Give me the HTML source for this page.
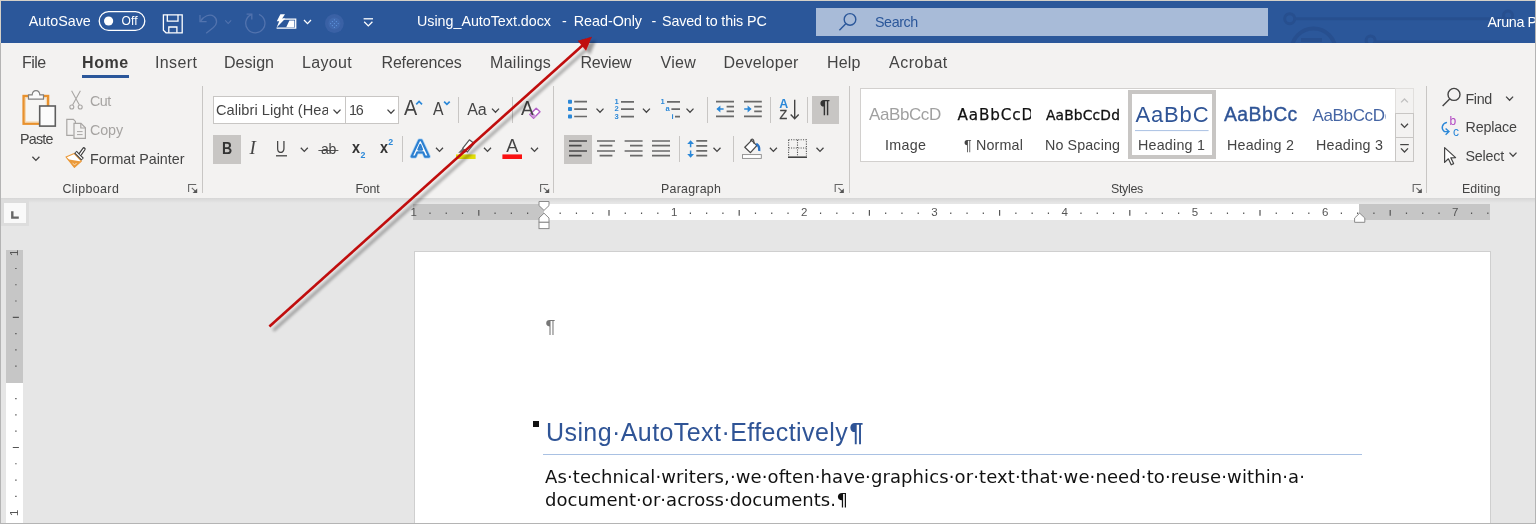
<!DOCTYPE html>
<html lang="en">
<head>
<meta charset="utf-8">
<title>Using_AutoText.docx - Read-Only - Word</title>
<style>
html,body{margin:0;padding:0;background:#fff;}
#app{position:relative;width:1536px;height:524px;overflow:hidden;background:#e6e6e6;font-family:"Liberation Sans",sans-serif;}
#app div{position:absolute;box-sizing:border-box;}
.layer{position:absolute;left:0;top:0;pointer-events:none;}
#texts{left:0;top:0;width:1536px;height:524px;will-change:transform;}
.t{position:absolute;white-space:pre;}
#titlebar{left:0;top:0;width:1536px;height:43px;background:#2b579a;}
#search{left:816px;top:8px;width:452px;height:28px;background:#a8bbd8;}
#ribbon{left:0;top:43px;width:1536px;height:155px;background:#f3f2f1;}
#ribshadow{left:0;top:198px;width:1536px;height:5px;background:linear-gradient(#d6d6d6,#e6e6e6);}
.sel{background:#c8c6c4;}
.combo{background:#fff;border:1px solid #c8c6c4;}
.vsep{width:1px;background:#c8c6c4;}
#gallery{left:860px;top:88px;width:554px;height:74px;background:#fff;border:1px solid #d2d0ce;}
#h1sel{left:1128px;top:90px;width:88px;height:69px;border:4px solid #c8c6c4;background:#fff;}
.gbtn{left:1395px;width:19px;background:#f3f2f1;border:1px solid #c8c6c4;}
#tabsel{left:1px;top:200px;width:28px;height:26px;background:#f9f9f9;border:3.5px solid #dddddd;}
#hruler{left:413px;top:204px;width:1077px;height:16px;background:#c6c6c6;}
#hrulerw{left:544px;top:204px;width:815px;height:16px;background:#fff;}
#vruler{left:6px;top:250px;width:17px;height:274px;background:#fff;}
#vrulerg{left:6px;top:250px;width:17px;height:133px;background:#c6c6c6;}
#page{left:414px;top:251px;width:1077px;height:280px;background:#fff;border:1px solid #cfcfcf;}
#h1line{left:543px;top:454px;width:819px;height:1px;background:#a9c1e3;}
#frame{left:0;top:0;width:1536px;height:524px;border:1px solid #b4b4b4;border-top-color:#d4d0c8;}
#frametl{left:0;top:0;width:1px;height:43px;background:#d4d0c8;}
#homeul{left:82px;top:75px;width:47px;height:3px;background:#2b579a;}
.clip{overflow:hidden;}

</style>
</head>
<body>
<div id="app">
<div id="titlebar"></div>
<div id="search"></div>
<div id="ribbon"></div>
<div id="ribshadow"></div>
<div id="homeul"></div>
<div class="vsep" style="left:202px;top:86px;height:107px"></div>
<div class="vsep" style="left:553px;top:86px;height:107px"></div>
<div class="vsep" style="left:849px;top:86px;height:107px"></div>
<div class="vsep" style="left:1426px;top:86px;height:107px"></div>
<div class="vsep" style="left:458px;top:97px;height:26px"></div>
<div class="vsep" style="left:512px;top:97px;height:26px"></div>
<div class="vsep" style="left:402px;top:136px;height:26px"></div>
<div class="vsep" style="left:707px;top:97px;height:26px"></div>
<div class="vsep" style="left:770px;top:97px;height:26px"></div>
<div class="vsep" style="left:807px;top:97px;height:26px"></div>
<div class="vsep" style="left:679px;top:136px;height:26px"></div>
<div class="vsep" style="left:733px;top:136px;height:26px"></div>
<div class="combo" style="left:213px;top:96px;width:133px;height:28px"></div>
<div class="combo" style="left:345px;top:96px;width:54px;height:28px"></div>
<div class="sel" style="left:213px;top:135px;width:28px;height:29px"></div>
<div class="sel" style="left:564px;top:135px;width:28px;height:29px"></div>
<div class="sel" style="left:812px;top:96px;width:27px;height:28px"></div>
<div id="gallery"></div>
<div id="h1sel"></div>
<div class="gbtn" style="top:88px;height:26px;border-color:#e1dfdd"></div>
<div class="gbtn" style="top:113px;height:25px"></div>
<div class="gbtn" style="top:137px;height:25px"></div>
<div id="tabsel"></div>
<div id="hruler"></div>
<div id="hrulerw"></div>
<div id="vruler"></div>
<div id="vrulerg"></div>
<div id="page"></div>
<div id="h1line"></div>
<div style="left:533px;top:421px;width:6px;height:6px;background:#111"></div>

<svg class="layer" width="1536" height="524" viewBox="0 0 1536 524">
<defs>
<path id="chev" d="M-3.5,-1.8 L0,1.8 L3.5,-1.8" fill="none" stroke-width="1.3"/>
<g id="launch" fill="none" stroke="#666" stroke-width="1.1"><path d="M0.6,8 V0.5 H8.2 M3.8,3.8 L8.6,8.4"/><path d="M9.2,4.4 V9 H4.6 Z" fill="#555" stroke="none"/></g>
</defs>
<!-- ===== title bar decorations ===== -->
<clipPath id="tbclip"><rect x="0" y="0" width="1536" height="43"/></clipPath>
<g fill="none" stroke="#274f8f" stroke-width="3" clip-path="url(#tbclip)">
<circle cx="1289.7" cy="18.7" r="5"/><path d="M1295,18.7 H1512"/>
<circle cx="1313.5" cy="50.5" r="22" stroke-width="4"/>
<path d="M1301,40 H1322" stroke-width="4"/>
<circle cx="1370.6" cy="40.5" r="4.5"/><path d="M1375,42 H1500"/>
<circle cx="1508" cy="15.4" r="4.5"/>
</g>
<!-- ===== title bar icons ===== -->
<g fill="none" stroke="#fff" stroke-width="1.3">
<rect x="99.2" y="11.6" width="45.6" height="18.8" rx="9.4"/>
<circle cx="108.6" cy="21" r="4.6" fill="#fff" stroke="none"/>
<!-- save -->
<path d="M163.4,14.8 H182.2 V32.8 H166 L163.4,30.2 Z"/>
<path d="M167.3,14.8 V21.2 H178 V14.8 M168.8,32.8 V27 H176.9 V32.8"/>
<!-- touch mode -->
<path d="M283,19.2 H295.7 V28.2 H276.6"/>
<path d="M286.2,27.2 L289.4,20.6 H294.4 V27.2 Z" fill="#fff" stroke="none"/>
<path d="M280.4,14.2 H285 L282.2,18.4 H285.4 L276.6,27.6 L279.2,21.2 H276.8 Z" fill="#fff" stroke="none"/>
<use href="#chev" x="307.5" y="21.8" stroke="#fff"/>
<path d="M363.6,18.8 H373"/>
<path d="M364.2,21.8 L368.3,25.9 L372.4,21.8"/>
</g>
<g fill="none" stroke="#5273ae" stroke-width="1.3">
<path d="M200,15 V21.6 H206.6"/>
<path d="M200.4,21.4 C203.4,16 210,13.4 214,16.4 C218,19.6 217,24.6 213.4,27.6 L206.2,33.2"/>
<use href="#chev" x="228.2" y="22" stroke="#5273ae" transform="translate(228.2 22) scale(0.85) translate(-228.2 -22)"/>
<path d="M251.2,14.6 A9.6,9.6 0 1 0 259,14.4"/>
<path d="M246.6,14.2 H251.8 V19.4"/>
</g>
<circle cx="334.4" cy="23.5" r="9.4" fill="#3a61a5"/>
<circle cx="334.4" cy="23.5" r="6" fill="#4069ae"/>
<g fill="#5d93dc"><circle cx="332.4" cy="21.6" r="0.7"/><circle cx="336.4" cy="21.6" r="0.7"/><circle cx="334.4" cy="23.6" r="0.7"/><circle cx="332.4" cy="25.6" r="0.7"/><circle cx="336.4" cy="25.6" r="0.7"/><circle cx="334.4" cy="19.8" r="0.6"/><circle cx="334.4" cy="27.4" r="0.6"/><circle cx="330.6" cy="23.6" r="0.6"/><circle cx="338.2" cy="23.6" r="0.6"/></g>
<!-- search icon -->
<g fill="none" stroke="#2b579a" stroke-width="1.4">
<circle cx="850" cy="19.4" r="5.8"/><path d="M846,23.6 L839.4,30.2"/>
</g>

<!-- ===== clipboard ===== -->
<rect x="23.6" y="96" width="24.5" height="27.7" fill="#f7f6f4" stroke="#e8912d" stroke-width="2.4"/>
<rect x="25.4" y="97.8" width="20.9" height="24.1" fill="none" stroke="#f6d7ac" stroke-width="1"/>
<path d="M28.5,99.2 V94.8 H32.2 C32.6,89.2 39.4,89.2 39.8,94.8 H43.5 V99.2 Z" fill="#fafafa" stroke="#808080" stroke-width="1.2"/>
<rect x="39.7" y="106" width="15.6" height="20.1" fill="#fbfbfb" stroke="#5e5e5e" stroke-width="1.6"/>
<use href="#chev" x="35.9" y="158.6" stroke="#444"/>
<!-- cut -->
<g fill="none" stroke="#a8a6a4" stroke-width="1.1">
<path d="M71.6,90.8 L79.4,105 M80.4,90.8 L72.6,105"/>
<circle cx="71.8" cy="107" r="2"/><circle cx="80.2" cy="107" r="2"/>
</g>
<!-- copy -->
<g fill="none" stroke="#a8a6a4" stroke-width="1.2">
<path d="M73.6,135.4 H66.8 V119.4 H73.4 L75.4,121.4 V123"/>
<path d="M74,123.4 H81 L85.4,127.8 V138.4 H74 Z" fill="#f3f2f1"/>
<path d="M80.8,123.6 V128 H85.2"/>
<path d="M77,131.6 H82.6 M77,134.6 H82.6" stroke-width="1"/>
</g>
<!-- format painter -->
<path d="M66,157 L74.2,153.6 L81.4,161.1 L74.4,167.4 Z" fill="#fff" stroke="#eb9a3a" stroke-width="1.1" stroke-linejoin="round"/>
<path d="M66,157 L69.2,159.4 L81.2,161.4 L74.4,167.4 Z" fill="#eb9a3a"/>
<path d="M72.6,163.2 L74.4,164.6 L76.6,163.4" fill="none" stroke="#fbe3c4" stroke-width="0.9"/>
<path d="M75.4,152 L82.6,159.2" stroke="#3d3d3d" stroke-width="3.6" fill="none"/>
<path d="M75.9,152.5 L82.1,158.7" stroke="#fff" stroke-width="1.3" fill="none"/>
<path d="M80.6,153.6 L83.9,149" stroke="#3d3d3d" stroke-width="3.6" stroke-linecap="round" fill="none"/>
<path d="M80.3,154.2 L83.9,149.2" stroke="#fff" stroke-width="1.3" stroke-linecap="round" fill="none"/>
<use href="#launch" x="188" y="184"/>

<!-- ===== font group ===== -->
<use href="#chev" x="337" y="111.4" stroke="#444"/>
<use href="#chev" x="391" y="111.4" stroke="#444"/>
<path d="M416.2,104.4 L419.1,101.5 L422,104.4" fill="none" stroke="#2b88d8" stroke-width="1.7"/>
<path d="M444.1,101.6 L446.9,104.4 L449.7,101.6" fill="none" stroke="#2b88d8" stroke-width="1.7"/>
<use href="#chev" x="495.5" y="110.4" stroke="#444"/>
<!-- clear formatting eraser -->
<path d="M529.8,114.6 L536.2,108.2 L540,111.8 L533.6,118.2 Z" fill="#fff" stroke="#b560c8" stroke-width="1.4" stroke-linejoin="round"/>
<path d="M530.4,114.6 L532.6,112.4 L536.2,116 L533.8,118 Z" fill="#cf9bdb"/>
<!-- underline U -->
<path d="M276,155.8 H287" stroke="#444" stroke-width="1.3"/>
<use href="#chev" x="304.3" y="149.6" stroke="#444"/>
<path d="M318.4,150.5 H338.4" stroke="#555" stroke-width="1"/>
<!-- text effects A -->
<path d="M411.6,156.6 L419.2,140.2 H421.4 L429,156.6 H425 L423.2,152.4 H417.2 L415.4,156.6 Z M418.3,149.6 H422.1 L420.3,144.8 Z" fill="none" stroke="#a9d2f5" stroke-width="3.6" stroke-linejoin="round"/>
<path d="M411.6,156.6 L419.2,140.2 H421.4 L429,156.6 H425 L423.2,152.4 H417.2 L415.4,156.6 Z M418.3,149.6 H422.1 L420.3,144.8 Z" fill="#fff" stroke="#2b7fd0" stroke-width="2.1" stroke-linejoin="round"/>
<use href="#chev" x="439.5" y="149.6" stroke="#444"/>
<!-- highlight -->
<path d="M462.6,148.4 L469.4,139.8 L474.2,143.4 L467.4,152 Z" fill="#fff" stroke="#555" stroke-width="1.2" stroke-linejoin="round"/>
<path d="M458.2,152.8 L462.4,148.6 L466.6,151.8 L464.6,152.8 Z" fill="#666"/>
<rect x="456" y="154.4" width="19.6" height="4.6" fill="#e2de08"/>
<use href="#chev" x="487.5" y="149.6" stroke="#444"/>
<rect x="502.4" y="154.4" width="19.6" height="4.6" fill="#fa1111"/>
<use href="#chev" x="534.5" y="149.6" stroke="#444"/>
<use href="#launch" x="540" y="184"/>

<!-- ===== paragraph group ===== -->
<!-- bullets -->
<g fill="#2b88d8"><rect x="568" y="99.7" width="4" height="4" rx="0.8"/><rect x="568" y="107.1" width="4" height="4" rx="0.8"/><rect x="568" y="114.5" width="4" height="4" rx="0.8"/></g>
<path d="M574.2,101.7 H587 M574.2,109.1 H587 M574.2,116.5 H587" stroke="#6a6a6a" stroke-width="1.7"/>
<use href="#chev" x="600" y="110.4" stroke="#444"/>
<!-- numbering -->
<path d="M621,101.8 H634 M621,109.2 H634 M621,116.6 H634" stroke="#6a6a6a" stroke-width="1.7"/>
<use href="#chev" x="646.4" y="110.4" stroke="#444"/>
<!-- multilevel -->
<path d="M667,101.8 H680 M671.4,109.2 H680 M675,116.6 H680" stroke="#6a6a6a" stroke-width="1.7"/>
<use href="#chev" x="690" y="110.4" stroke="#444"/>
<!-- decrease indent -->
<path d="M716,101.6 H734 M726.6,106.6 H734 M726.6,111.4 H734 M716,116.4 H734" stroke="#6a6a6a" stroke-width="1.7"/>
<path d="M723.6,109 H717.4" fill="none" stroke="#2b88d8" stroke-width="1.5"/><path d="M720.4,105.6 L716.4,109 L720.4,112.4 Z" fill="#2b88d8"/>
<!-- increase indent -->
<path d="M744,101.6 H761.8 M754.2,106.6 H761.8 M754.2,111.4 H761.8 M744,116.4 H761.8" stroke="#6a6a6a" stroke-width="1.7"/>
<path d="M744.2,109 H750.4" fill="none" stroke="#2b88d8" stroke-width="1.5"/><path d="M747.6,105.6 L751.6,109 L747.6,112.4 Z" fill="#2b88d8"/>
<!-- sort arrow -->
<path d="M794.7,99.8 V118.6 M790.7,114.6 L794.7,118.8 L798.7,114.6" fill="none" stroke="#444" stroke-width="1.4"/>
<!-- align left -->
<path d="M569,141 H587 M569,145.6 H581.6 M569,151 H587 M569,155.6 H581.6" stroke="#4a4a4a" stroke-width="1.7"/>
<path d="M597,141 H615 M599.6,145.6 H612.4 M597,151 H615 M599.6,155.6 H612.4" stroke="#6a6a6a" stroke-width="1.7"/>
<path d="M624.6,141 H642.6 M630,145.6 H642.6 M624.6,151 H642.6 M630,155.6 H642.6" stroke="#6a6a6a" stroke-width="1.7"/>
<path d="M652,141 H670 M652,145.6 H670 M652,151 H670 M652,155.6 H670" stroke="#6a6a6a" stroke-width="1.7"/>
<!-- line spacing -->
<path d="M696.3,140.8 H707.2 M696.3,145.8 H707.2 M696.3,150.8 H707.2 M696.3,155.7 H707.2" stroke="#6a6a6a" stroke-width="1.7"/>
<path d="M690.6,142 V147.2 M690.6,150.4 V156" fill="none" stroke="#2b88d8" stroke-width="1.5"/>
<path d="M687.2,144 L690.6,140.2 L694,144 Z M687.2,154 L690.6,157.8 L694,154 Z" fill="#2b88d8"/>
<use href="#chev" x="717" y="149.6" stroke="#444"/>
<!-- shading -->
<path d="M744.8,147.2 L751.6,140.4 L756.8,145.6 L750.4,152.6 Z" fill="#fff" stroke="#4a4a4a" stroke-width="1.3" stroke-linejoin="round"/>
<path d="M750.6,141.6 C750.4,138.6 753.6,138.4 753.8,141 L754,143.6" fill="none" stroke="#4a4a4a" stroke-width="1.2"/>
<path d="M756.2,143.8 C758.6,145.2 759.6,147.6 759.2,151" fill="none" stroke="#2b73c4" stroke-width="2.4"/>
<rect x="742.5" y="154.6" width="18.8" height="3.8" fill="#fff" stroke="#8a8a8a" stroke-width="0.9"/>
<use href="#chev" x="773.4" y="149.6" stroke="#444"/>
<!-- borders -->
<path d="M788.6,139.8 H806.4 V156 M788.6,139.8 V156 M797.5,139.8 V156 M788.6,148 H806.4" fill="none" stroke="#555" stroke-width="1.1" stroke-dasharray="1.1 1.3"/>
<path d="M788,157.2 H807" stroke="#444" stroke-width="1.6"/>
<use href="#chev" x="820" y="149.6" stroke="#444"/>
<use href="#launch" x="834.6" y="184"/>

<!-- ===== styles ===== -->
<path d="M1135,130.6 H1208.6" stroke="#a9c1e3" stroke-width="1"/>
<path d="M1401.1,102.4 L1404.5,99 L1407.9,102.4" fill="none" stroke="#c0c0c0" stroke-width="1.3"/>
<use href="#chev" x="1404.5" y="125.6" stroke="#444"/>
<path d="M1400.2,144.6 H1408.8" stroke="#444" stroke-width="1.2"/>
<use href="#chev" x="1404.5" y="150.2" stroke="#444"/>
<use href="#launch" x="1412.6" y="184"/>

<!-- ===== editing ===== -->
<g fill="none" stroke="#444" stroke-width="1.4">
<circle cx="1454" cy="94.4" r="6"/><path d="M1449.6,99 L1442.6,106"/>
</g>
<use href="#chev" x="1509.6" y="98.4" stroke="#444"/>
<path d="M1447,122.4 C1442,123.4 1440.6,128.6 1444.4,131.6 L1448.6,131.6 M1445.6,128.4 L1449,131.6 L1445.6,134.8" fill="none" stroke="#2b88d8" stroke-width="1.4"/>
<path d="M1444.6,147.6 L1444.6,162.4 L1448.4,158.8 L1451.2,164.8 L1453.6,163.6 L1450.8,157.8 L1455.6,157.6 Z" fill="#fff" stroke="#444" stroke-width="1.2" stroke-linejoin="round"/>
<use href="#chev" x="1513" y="154.4" stroke="#444"/>

<!-- ===== rulers ===== -->
<path d="M12.3,211.2 V217.6 H18.8" fill="none" stroke="#666" stroke-width="2.4"/>
<path d="M429.98,212.5 V213.9 M446.25,212.5 V213.9 M462.52,212.5 V213.9 M495.07,212.5 V213.9 M511.35,212.5 V213.9 M527.62,212.5 V213.9 M560.17,212.5 V213.9 M576.45,212.5 V213.9 M592.73,212.5 V213.9 M625.27,212.5 V213.9 M641.55,212.5 V213.9 M657.82,212.5 V213.9 M690.38,212.5 V213.9 M706.65,212.5 V213.9 M722.92,212.5 V213.9 M755.47,212.5 V213.9 M771.75,212.5 V213.9 M788.02,212.5 V213.9 M820.57,212.5 V213.9 M836.85,212.5 V213.9 M853.12,212.5 V213.9 M885.67,212.5 V213.9 M901.95,212.5 V213.9 M918.22,212.5 V213.9 M950.77,212.5 V213.9 M967.05,212.5 V213.9 M983.32,212.5 V213.9 M1015.88,212.5 V213.9 M1032.15,212.5 V213.9 M1048.42,212.5 V213.9 M1080.97,212.5 V213.9 M1097.25,212.5 V213.9 M1113.53,212.5 V213.9 M1146.07,212.5 V213.9 M1162.35,212.5 V213.9 M1178.62,212.5 V213.9 M1211.17,212.5 V213.9 M1227.45,212.5 V213.9 M1243.72,212.5 V213.9 M1276.27,212.5 V213.9 M1292.55,212.5 V213.9 M1308.82,212.5 V213.9 M1341.38,212.5 V213.9 M1357.65,212.5 V213.9 M1373.92,212.5 V213.9 M1406.47,212.5 V213.9 M1422.75,212.5 V213.9 M1439.02,212.5 V213.9 M1471.57,212.5 V213.9 M1487.85,212.5 V213.9" stroke="#555" stroke-width="1.2"/>
<path d="M478.80,210 V215.8 M609.00,210 V215.8 M739.20,210 V215.8 M869.40,210 V215.8 M999.60,210 V215.8 M1129.80,210 V215.8 M1260.00,210 V215.8 M1390.20,210 V215.8" stroke="#555" stroke-width="1.2"/>
<path d="M15.2,268.48 H16.6 M15.2,284.75 H16.6 M15.2,301.02 H16.6 M15.2,333.57 H16.6 M15.2,349.85 H16.6 M15.2,366.12 H16.6 M15.2,398.67 H16.6 M15.2,414.95 H16.6 M15.2,431.22 H16.6 M15.2,463.77 H16.6 M15.2,480.05 H16.6 M15.2,496.32 H16.6" stroke="#555" stroke-width="1.2"/>
<path d="M12.8,317.30 H18.9 M12.8,447.50 H18.9" stroke="#555" stroke-width="1.2"/>
<g fill="#fff" stroke="#8a8a8a" stroke-width="1">
<path d="M539,201.5 H549 V205.6 L544,210.4 L539,205.6 Z"/>
<path d="M539,222.3 V218 L544,213.2 L549,218 V222.3 Z"/>
<rect x="539" y="222.3" width="10" height="6.3"/>
<path d="M1354.6,222.3 V218 L1359.7,213.2 L1364.8,218 V222.3 Z"/>
</g>

</svg>
<div id="texts">
<span class="t" style="left:28.70px;top:14.20px;font:14.3px/14.3px &quot;Liberation Sans&quot;, sans-serif;color:#ffffff;letter-spacing:0.013px;">AutoSave</span>
<span class="t" style="left:121.60px;top:15.24px;font:12px/12px &quot;Liberation Sans&quot;, sans-serif;color:#ffffff;letter-spacing:0.081px;">Off</span>
<span class="t" style="left:417.00px;top:13.50px;font:14.3px/14.3px &quot;Liberation Sans&quot;, sans-serif;color:#ffffff;letter-spacing:-0.017px;">Using_AutoText.docx</span>
<span class="t" style="left:562.00px;top:13.50px;font:14.3px/14.3px &quot;Liberation Sans&quot;, sans-serif;color:#ffffff;">-</span>
<span class="t" style="left:573.75px;top:13.50px;font:14.3px/14.3px &quot;Liberation Sans&quot;, sans-serif;color:#ffffff;letter-spacing:-0.011px;">Read-Only</span>
<span class="t" style="left:651.50px;top:13.50px;font:14.3px/14.3px &quot;Liberation Sans&quot;, sans-serif;color:#ffffff;">-</span>
<span class="t" style="left:662.00px;top:13.50px;font:14.3px/14.3px &quot;Liberation Sans&quot;, sans-serif;color:#ffffff;letter-spacing:-0.116px;">Saved to this PC</span>
<span class="t" style="left:875.00px;top:14.90px;font:14.3px/14.3px &quot;Liberation Sans&quot;, sans-serif;color:#2b579a;letter-spacing:-0.420px;">Search</span>
<span class="t" style="left:1487.60px;top:14.90px;font:14.3px/14.3px &quot;Liberation Sans&quot;, sans-serif;color:#ffffff;letter-spacing:-0.350px;">Aruna P</span>
<span class="t" style="left:22.00px;top:54.66px;font:16px/16px &quot;Liberation Sans&quot;, sans-serif;color:#444;letter-spacing:-0.509px;">File</span>
<span class="t" style="left:82.00px;top:54.66px;font:16px/16px &quot;Liberation Sans&quot;, sans-serif;color:#3b3a39;letter-spacing:0.585px;font-weight:bold;">Home</span>
<span class="t" style="left:155.00px;top:54.66px;font:16px/16px &quot;Liberation Sans&quot;, sans-serif;color:#444;letter-spacing:0.361px;">Insert</span>
<span class="t" style="left:224.00px;top:54.66px;font:16px/16px &quot;Liberation Sans&quot;, sans-serif;color:#444;letter-spacing:0.034px;">Design</span>
<span class="t" style="left:302.00px;top:54.66px;font:16px/16px &quot;Liberation Sans&quot;, sans-serif;color:#444;letter-spacing:0.355px;">Layout</span>
<span class="t" style="left:381.50px;top:54.66px;font:16px/16px &quot;Liberation Sans&quot;, sans-serif;color:#444;letter-spacing:-0.171px;">References</span>
<span class="t" style="left:490.00px;top:54.66px;font:16px/16px &quot;Liberation Sans&quot;, sans-serif;color:#444;letter-spacing:0.308px;">Mailings</span>
<span class="t" style="left:580.40px;top:54.66px;font:16px/16px &quot;Liberation Sans&quot;, sans-serif;color:#444;letter-spacing:-0.249px;">Review</span>
<span class="t" style="left:660.60px;top:54.66px;font:16px/16px &quot;Liberation Sans&quot;, sans-serif;color:#444;letter-spacing:0.288px;">View</span>
<span class="t" style="left:723.50px;top:54.66px;font:16px/16px &quot;Liberation Sans&quot;, sans-serif;color:#444;letter-spacing:0.243px;">Developer</span>
<span class="t" style="left:827.00px;top:54.66px;font:16px/16px &quot;Liberation Sans&quot;, sans-serif;color:#444;letter-spacing:0.141px;">Help</span>
<span class="t" style="left:889.00px;top:54.66px;font:16px/16px &quot;Liberation Sans&quot;, sans-serif;color:#444;letter-spacing:0.517px;">Acrobat</span>
<span class="t" style="left:20.00px;top:132.40px;font:14.3px/14.3px &quot;Liberation Sans&quot;, sans-serif;color:#444;letter-spacing:-0.792px;">Paste</span>
<span class="t" style="left:90.00px;top:93.65px;font:14.3px/14.3px &quot;Liberation Sans&quot;, sans-serif;color:#a6a4a2;letter-spacing:-0.500px;">Cut</span>
<span class="t" style="left:90.00px;top:122.90px;font:14.3px/14.3px &quot;Liberation Sans&quot;, sans-serif;color:#a6a4a2;letter-spacing:-0.112px;">Copy</span>
<span class="t" style="left:90.00px;top:152.40px;font:14.3px/14.3px &quot;Liberation Sans&quot;, sans-serif;color:#444;letter-spacing:-0.005px;">Format Painter</span>
<span class="t" style="left:62.50px;top:182.50px;font:12.4px/12.4px &quot;Liberation Sans&quot;, sans-serif;color:#444;letter-spacing:0.406px;">Clipboard</span>
<span class="t" style="left:355.50px;top:182.50px;font:12.4px/12.4px &quot;Liberation Sans&quot;, sans-serif;color:#444;letter-spacing:-0.228px;">Font</span>
<span class="t" style="left:661.00px;top:182.50px;font:12.4px/12.4px &quot;Liberation Sans&quot;, sans-serif;color:#444;letter-spacing:0.250px;">Paragraph</span>
<span class="t" style="left:1111.00px;top:182.50px;font:12.4px/12.4px &quot;Liberation Sans&quot;, sans-serif;color:#444;letter-spacing:-0.318px;">Styles</span>
<span class="t" style="left:1462.00px;top:182.50px;font:12.4px/12.4px &quot;Liberation Sans&quot;, sans-serif;color:#444;letter-spacing:0.094px;">Editing</span>
<div class="clip" style="left:0;top:0;width:327.6px;height:524px"><span class="t" style="left:216.00px;top:102.54px;font:14.6px/14.6px &quot;Liberation Sans&quot;, sans-serif;color:#444;letter-spacing:0.049px;">Calibri Light (Hea</span></div>
<span class="t" style="left:349.00px;top:102.90px;font:14.3px/14.3px &quot;Liberation Sans&quot;, sans-serif;color:#444;letter-spacing:-1.271px;">16</span>
<span class="t" style="left:222.20px;top:139.52px;font:16.4px/16.4px &quot;Liberation Sans&quot;, sans-serif;color:#333;font-weight:bold;transform:scaleX(.86);transform-origin:0 50%;">B</span>
<span class="t" style="left:249.60px;top:137.59px;font:19px/19px &quot;Liberation Serif&quot;, serif;color:#444444;font-style:italic;">I</span>
<span class="t" style="left:276.40px;top:139.73px;font:15.8px/15.8px &quot;Liberation Sans&quot;, sans-serif;color:#444444;transform:scaleX(.84);transform-origin:0 50%;">U</span>
<span class="t" style="left:321.00px;top:142.15px;font:14px/14px &quot;Liberation Sans&quot;, sans-serif;color:#444444;letter-spacing:-0.385px;">ab</span>
<span class="t" style="left:351.80px;top:140.26px;font:16px/16px &quot;Liberation Sans&quot;, sans-serif;color:#333;font-weight:bold;transform:scaleX(.9);transform-origin:0 50%;">x</span>
<span class="t" style="left:360.60px;top:151.45px;font:8.8px/8.8px &quot;Liberation Sans&quot;, sans-serif;color:#2b88d8;font-weight:bold;">2</span>
<span class="t" style="left:379.80px;top:140.26px;font:16px/16px &quot;Liberation Sans&quot;, sans-serif;color:#333;font-weight:bold;transform:scaleX(.9);transform-origin:0 50%;">x</span>
<span class="t" style="left:388.20px;top:138.25px;font:8.8px/8.8px &quot;Liberation Sans&quot;, sans-serif;color:#2b88d8;font-weight:bold;">2</span>
<span class="t" style="left:403.80px;top:96.98px;font:22px/22px &quot;Liberation Sans&quot;, sans-serif;color:#444444;transform:scaleX(.9);transform-origin:0 50%;">A</span>
<span class="t" style="left:433.40px;top:100.79px;font:17.5px/17.5px &quot;Liberation Sans&quot;, sans-serif;color:#444444;transform:scaleX(.9);transform-origin:0 50%;">A</span>
<span class="t" style="left:467.20px;top:101.86px;font:16px/16px &quot;Liberation Sans&quot;, sans-serif;color:#444444;letter-spacing:0.015px;">Aa</span>
<span class="t" style="left:520.80px;top:97.22px;font:21px/21px &quot;Liberation Sans&quot;, sans-serif;color:#444444;transform:scaleX(.9);transform-origin:0 50%;">A</span>
<span class="t" style="left:506.20px;top:137.36px;font:18px/18px &quot;Liberation Sans&quot;, sans-serif;color:#444444;">A</span>
<span class="t" style="left:779.30px;top:98.30px;font:12.4px/12.4px &quot;Liberation Sans&quot;, sans-serif;color:#2b88d8;font-weight:bold;">A</span>
<span class="t" style="left:779.60px;top:109.42px;font:12.5px/12.5px &quot;Liberation Sans&quot;, sans-serif;color:#444444;-webkit-text-stroke:0.3px #444;">Z</span>
<span class="t" style="left:819.80px;top:98.46px;font:18.6px/18.6px &quot;Liberation Sans&quot;, sans-serif;color:#333;font-weight:bold;">¶</span>
<span class="t" style="left:869.00px;top:105.61px;font:17px/17px &quot;Liberation Sans&quot;, sans-serif;color:#a0a0a0;letter-spacing:-0.406px;">AaBbCcD</span>
<span class="t" style="left:885.00px;top:137.70px;font:14.3px/14.3px &quot;Liberation Sans&quot;, sans-serif;color:#444;letter-spacing:0.278px;">Image</span>
<div class="clip" style="left:0;top:0;width:1031px;height:524px"><span class="t" style="left:957.50px;top:107.84px;font:15.2px/15.2px &quot;DejaVu Sans&quot;, &quot;Liberation Sans&quot;, sans-serif;color:#111;-webkit-text-stroke:0.25px #111;letter-spacing:0.9px;">AaBbCcD</span></div>
<span class="t" style="left:964.00px;top:137.70px;font:14.3px/14.3px &quot;Liberation Sans&quot;, sans-serif;color:#444;letter-spacing:0.169px;">¶ Normal</span>
<span class="t" style="left:1046.00px;top:108.73px;font:13.8px/13.8px &quot;DejaVu Sans&quot;, &quot;Liberation Sans&quot;, sans-serif;color:#111;letter-spacing:0.171px;-webkit-text-stroke:0.3px #111;">AaBbCcDd</span>
<span class="t" style="left:1045.00px;top:137.70px;font:14.3px/14.3px &quot;Liberation Sans&quot;, sans-serif;color:#444;letter-spacing:0.113px;">No Spacing</span>
<span class="t" style="left:1135.50px;top:104.08px;font:22px/22px &quot;Liberation Sans&quot;, sans-serif;color:#2f5496;letter-spacing:0.840px;">AaBbC</span>
<span class="t" style="left:1138.00px;top:137.70px;font:14.3px/14.3px &quot;Liberation Sans&quot;, sans-serif;color:#444;letter-spacing:0.213px;">Heading 1</span>
<span class="t" style="left:1224.00px;top:104.98px;font:19.4px/19.4px &quot;Liberation Sans&quot;, sans-serif;color:#2f5496;letter-spacing:0.429px;-webkit-text-stroke:0.35px #2f5496;">AaBbCc</span>
<span class="t" style="left:1227.00px;top:137.70px;font:14.3px/14.3px &quot;Liberation Sans&quot;, sans-serif;color:#444;letter-spacing:0.213px;">Heading 2</span>
<div class="clip" style="left:0;top:0;width:1386px;height:524px"><span class="t" style="left:1312.50px;top:106.61px;font:17px/17px &quot;Liberation Sans&quot;, sans-serif;color:#4565a4;letter-spacing:-0.348px;">AaBbCcDd</span></div>
<span class="t" style="left:1316.00px;top:137.70px;font:14.3px/14.3px &quot;Liberation Sans&quot;, sans-serif;color:#444;letter-spacing:0.213px;">Heading 3</span>
<span class="t" style="left:1465.50px;top:91.65px;font:14.3px/14.3px &quot;Liberation Sans&quot;, sans-serif;color:#444;letter-spacing:-0.375px;">Find</span>
<span class="t" style="left:1465.50px;top:120.40px;font:14.3px/14.3px &quot;Liberation Sans&quot;, sans-serif;color:#444;letter-spacing:-0.149px;">Replace</span>
<span class="t" style="left:1465.50px;top:148.90px;font:14.3px/14.3px &quot;Liberation Sans&quot;, sans-serif;color:#444;letter-spacing:-0.227px;">Select</span>
<span class="t" style="left:1449.50px;top:115.34px;font:12px/12px &quot;Liberation Sans&quot;, sans-serif;color:#b146c2;">b</span>
<span class="t" style="left:1453.00px;top:125.84px;font:12px/12px &quot;Liberation Sans&quot;, sans-serif;color:#2b88d8;">c</span>
<span class="t" style="left:410.50px;top:207.27px;font:11.5px/11.5px &quot;Liberation Sans&quot;, sans-serif;color:#555;">1</span>
<span class="t" style="left:670.90px;top:207.27px;font:11.5px/11.5px &quot;Liberation Sans&quot;, sans-serif;color:#555;">1</span>
<span class="t" style="left:801.10px;top:207.27px;font:11.5px/11.5px &quot;Liberation Sans&quot;, sans-serif;color:#555;">2</span>
<span class="t" style="left:931.30px;top:207.27px;font:11.5px/11.5px &quot;Liberation Sans&quot;, sans-serif;color:#555;">3</span>
<span class="t" style="left:1061.50px;top:207.27px;font:11.5px/11.5px &quot;Liberation Sans&quot;, sans-serif;color:#555;">4</span>
<span class="t" style="left:1191.70px;top:207.27px;font:11.5px/11.5px &quot;Liberation Sans&quot;, sans-serif;color:#555;">5</span>
<span class="t" style="left:1321.90px;top:207.27px;font:11.5px/11.5px &quot;Liberation Sans&quot;, sans-serif;color:#555;">6</span>
<span class="t" style="left:1452.10px;top:207.27px;font:11.5px/11.5px &quot;Liberation Sans&quot;, sans-serif;color:#555;">7</span>
<span class="t" style="left:545.60px;top:318.34px;font:18.5px/18.5px &quot;Liberation Sans&quot;, sans-serif;color:#777;">¶</span>
<span class="t" style="left:546.00px;top:420.34px;font:25px/25px &quot;Liberation Sans&quot;, sans-serif;color:#2f5496;letter-spacing:0.419px;">Using·AutoText·Effectively</span>
<span class="t" style="left:849.50px;top:420.34px;font:25px/25px &quot;Liberation Sans&quot;, sans-serif;color:#2f5496;font-weight:bold;">¶</span>
<span class="t" style="left:545.00px;top:468.27px;font:18px/18px &quot;DejaVu Sans&quot;, &quot;Liberation Sans&quot;, sans-serif;color:#111;letter-spacing:0.106px;">As·technical·writers,·we·often·have·graphics·or·text·that·we·need·to·reuse·within·a·</span>
<span class="t" style="left:545.00px;top:491.17px;font:18px/18px &quot;DejaVu Sans&quot;, &quot;Liberation Sans&quot;, sans-serif;color:#111;letter-spacing:0.035px;">document·or·across·documents.</span>
<span class="t" style="left:836.50px;top:491.17px;font:18px/18px &quot;DejaVu Sans&quot;, &quot;Liberation Sans&quot;, sans-serif;color:#111;">¶</span>
<span class="t" style="left:614.40px;top:97.97px;font:7.6px/7.6px &quot;Liberation Sans&quot;, sans-serif;color:#2b88d8;font-weight:bold;">1</span>
<span class="t" style="left:614.40px;top:105.37px;font:7.6px/7.6px &quot;Liberation Sans&quot;, sans-serif;color:#2b88d8;font-weight:bold;">2</span>
<span class="t" style="left:614.40px;top:112.77px;font:7.6px/7.6px &quot;Liberation Sans&quot;, sans-serif;color:#2b88d8;font-weight:bold;">3</span>
<span class="t" style="left:660.60px;top:97.97px;font:7.6px/7.6px &quot;Liberation Sans&quot;, sans-serif;color:#2b88d8;font-weight:bold;">1</span>
<span class="t" style="left:665.40px;top:105.17px;font:7.6px/7.6px &quot;Liberation Sans&quot;, sans-serif;color:#2b88d8;font-weight:bold;">a</span>
<span class="t" style="left:671.40px;top:112.77px;font:7.6px/7.6px &quot;Liberation Sans&quot;, sans-serif;color:#2b88d8;font-weight:bold;">i</span>
<span class="t" style="left:12.30px;top:246.77px;font:11.5px/11.5px &quot;Liberation Sans&quot;, sans-serif;color:#555;transform:rotate(-90deg);transform-origin:50% 50%;">1</span>
<span class="t" style="left:12.30px;top:506.77px;font:11.5px/11.5px &quot;Liberation Sans&quot;, sans-serif;color:#555;transform:rotate(-90deg);transform-origin:50% 50%;">1</span>
</div>
<svg class="layer" width="1536" height="524" viewBox="0 0 1536 524">
<defs>
<filter id="ash" x="-5%" y="-5%" width="112%" height="112%">
<feGaussianBlur in="SourceAlpha" stdDeviation="1.7"/>
<feOffset dx="3.7" dy="3.7" result="b"/>
<feComponentTransfer><feFuncA type="linear" slope="0.36"/></feComponentTransfer>
<feMerge><feMergeNode/><feMergeNode in="SourceGraphic"/></feMerge>
</filter>
</defs>
<g filter="url(#ash)">
<path d="M269.4,326.5 L583,45" stroke="#c00a0a" stroke-width="2.6" fill="none"/>
<path d="M591.9,36.8 L577.8,40.8 L586,50.7 Z" fill="#c00a0a"/>
</g>

</svg>
<div id="frame"></div><div id="frametl"></div>
</div>
</body>
</html>
